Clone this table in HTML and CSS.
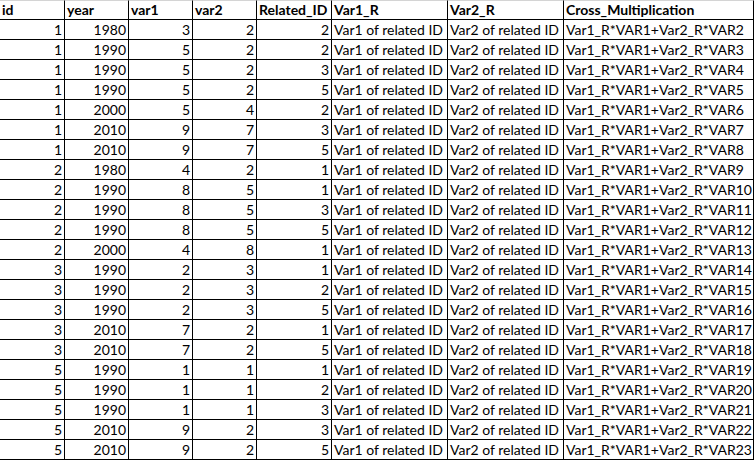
FILE: index.html
```html
<!DOCTYPE html>
<html>
<head>
<meta charset="utf-8">
<link rel="stylesheet" href="styles.css">
</head>
<body>
<div class="sheet">
  <div class="row head">
    <div class="c">id</div><div class="c">year</div><div class="c">var1</div><div class="c">var2</div><div class="c">Related_ID</div><div class="c">Var1_R</div><div class="c">Var2_R</div><div class="c">Cross_Multiplication</div>
  </div>
  <div class="row"><div class="c n">1</div><div class="c n">1980</div><div class="c n">3</div><div class="c n">2</div><div class="c n">2</div><div class="c">Var1 of related ID</div><div class="c">Var2 of related ID</div><div class="c">Var1_R*VAR1+Var2_R*VAR2</div></div>
  <div class="row"><div class="c n">1</div><div class="c n">1990</div><div class="c n">5</div><div class="c n">2</div><div class="c n">2</div><div class="c">Var1 of related ID</div><div class="c">Var2 of related ID</div><div class="c">Var1_R*VAR1+Var2_R*VAR3</div></div>
  <div class="row"><div class="c n">1</div><div class="c n">1990</div><div class="c n">5</div><div class="c n">2</div><div class="c n">3</div><div class="c">Var1 of related ID</div><div class="c">Var2 of related ID</div><div class="c">Var1_R*VAR1+Var2_R*VAR4</div></div>
  <div class="row"><div class="c n">1</div><div class="c n">1990</div><div class="c n">5</div><div class="c n">2</div><div class="c n">5</div><div class="c">Var1 of related ID</div><div class="c">Var2 of related ID</div><div class="c">Var1_R*VAR1+Var2_R*VAR5</div></div>
  <div class="row"><div class="c n">1</div><div class="c n">2000</div><div class="c n">5</div><div class="c n">4</div><div class="c n">2</div><div class="c">Var1 of related ID</div><div class="c">Var2 of related ID</div><div class="c">Var1_R*VAR1+Var2_R*VAR6</div></div>
  <div class="row"><div class="c n">1</div><div class="c n">2010</div><div class="c n">9</div><div class="c n">7</div><div class="c n">3</div><div class="c">Var1 of related ID</div><div class="c">Var2 of related ID</div><div class="c">Var1_R*VAR1+Var2_R*VAR7</div></div>
  <div class="row"><div class="c n">1</div><div class="c n">2010</div><div class="c n">9</div><div class="c n">7</div><div class="c n">5</div><div class="c">Var1 of related ID</div><div class="c">Var2 of related ID</div><div class="c">Var1_R*VAR1+Var2_R*VAR8</div></div>
  <div class="row"><div class="c n">2</div><div class="c n">1980</div><div class="c n">4</div><div class="c n">2</div><div class="c n">1</div><div class="c">Var1 of related ID</div><div class="c">Var2 of related ID</div><div class="c">Var1_R*VAR1+Var2_R*VAR9</div></div>
  <div class="row"><div class="c n">2</div><div class="c n">1990</div><div class="c n">8</div><div class="c n">5</div><div class="c n">1</div><div class="c">Var1 of related ID</div><div class="c">Var2 of related ID</div><div class="c">Var1_R*VAR1+Var2_R*VAR10</div></div>
  <div class="row"><div class="c n">2</div><div class="c n">1990</div><div class="c n">8</div><div class="c n">5</div><div class="c n">3</div><div class="c">Var1 of related ID</div><div class="c">Var2 of related ID</div><div class="c">Var1_R*VAR1+Var2_R*VAR11</div></div>
  <div class="row"><div class="c n">2</div><div class="c n">1990</div><div class="c n">8</div><div class="c n">5</div><div class="c n">5</div><div class="c">Var1 of related ID</div><div class="c">Var2 of related ID</div><div class="c">Var1_R*VAR1+Var2_R*VAR12</div></div>
  <div class="row"><div class="c n">2</div><div class="c n">2000</div><div class="c n">4</div><div class="c n">8</div><div class="c n">1</div><div class="c">Var1 of related ID</div><div class="c">Var2 of related ID</div><div class="c">Var1_R*VAR1+Var2_R*VAR13</div></div>
  <div class="row"><div class="c n">3</div><div class="c n">1990</div><div class="c n">2</div><div class="c n">3</div><div class="c n">1</div><div class="c">Var1 of related ID</div><div class="c">Var2 of related ID</div><div class="c">Var1_R*VAR1+Var2_R*VAR14</div></div>
  <div class="row"><div class="c n">3</div><div class="c n">1990</div><div class="c n">2</div><div class="c n">3</div><div class="c n">2</div><div class="c">Var1 of related ID</div><div class="c">Var2 of related ID</div><div class="c">Var1_R*VAR1+Var2_R*VAR15</div></div>
  <div class="row"><div class="c n">3</div><div class="c n">1990</div><div class="c n">2</div><div class="c n">3</div><div class="c n">5</div><div class="c">Var1 of related ID</div><div class="c">Var2 of related ID</div><div class="c">Var1_R*VAR1+Var2_R*VAR16</div></div>
  <div class="row"><div class="c n">3</div><div class="c n">2010</div><div class="c n">7</div><div class="c n">2</div><div class="c n">1</div><div class="c">Var1 of related ID</div><div class="c">Var2 of related ID</div><div class="c">Var1_R*VAR1+Var2_R*VAR17</div></div>
  <div class="row"><div class="c n">3</div><div class="c n">2010</div><div class="c n">7</div><div class="c n">2</div><div class="c n">5</div><div class="c">Var1 of related ID</div><div class="c">Var2 of related ID</div><div class="c">Var1_R*VAR1+Var2_R*VAR18</div></div>
  <div class="row"><div class="c n">5</div><div class="c n">1990</div><div class="c n">1</div><div class="c n">1</div><div class="c n">1</div><div class="c">Var1 of related ID</div><div class="c">Var2 of related ID</div><div class="c">Var1_R*VAR1+Var2_R*VAR19</div></div>
  <div class="row"><div class="c n">5</div><div class="c n">1990</div><div class="c n">1</div><div class="c n">1</div><div class="c n">2</div><div class="c">Var1 of related ID</div><div class="c">Var2 of related ID</div><div class="c">Var1_R*VAR1+Var2_R*VAR20</div></div>
  <div class="row"><div class="c n">5</div><div class="c n">1990</div><div class="c n">1</div><div class="c n">1</div><div class="c n">3</div><div class="c">Var1 of related ID</div><div class="c">Var2 of related ID</div><div class="c">Var1_R*VAR1+Var2_R*VAR21</div></div>
  <div class="row"><div class="c n">5</div><div class="c n">2010</div><div class="c n">9</div><div class="c n">2</div><div class="c n">3</div><div class="c">Var1 of related ID</div><div class="c">Var2 of related ID</div><div class="c">Var1_R*VAR1+Var2_R*VAR22</div></div>
  <div class="row"><div class="c n">5</div><div class="c n">2010</div><div class="c n">9</div><div class="c n">2</div><div class="c n">5</div><div class="c">Var1 of related ID</div><div class="c">Var2 of related ID</div><div class="c">Var1_R*VAR1+Var2_R*VAR23</div></div>
</div>
</body>
</html>
```
FILE: styles.css
```css
html, body {
  margin: 0;
  padding: 0;
  background: #ffffff;
}
.sheet {
  width: 754px;
  font-family: "Lato", "Liberation Sans", sans-serif;
  font-size: 14px;
  color: #000000;
}
.row {
  display: grid;
  grid-template-columns: 65px 64px 64px 64px 75px 116px 116px 190px;
  height: 20px;
}
.c {
  box-sizing: border-box;
  height: 20px;
  border-right: 1px solid #000000;
  border-bottom: 1px solid #000000;
  padding: 0 2px;
  line-height: 20px;
  white-space: nowrap;
  overflow: hidden;
}
.n {
  text-align: right;
}
.head .c {
  font-weight: bold;
  border-top: 1px solid #d4d4d4;
  line-height: 18px;
}
```
